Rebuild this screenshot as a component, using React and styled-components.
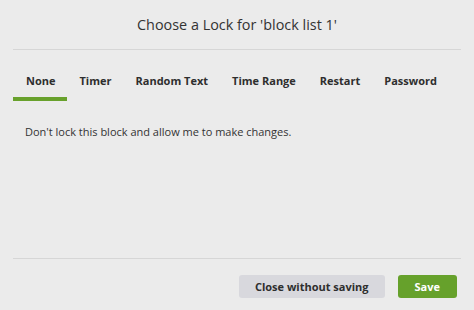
import React, { useState } from 'react'
import styled, { createGlobalStyle } from 'styled-components'

const tabs = ['None', 'Timer', 'Random Text', 'Time Range', 'Restart', 'Password']

const App = () => {
    const [active, setActive] = useState(0)
    return (
        <>
            <Global />
            <Dialog>
                <Header>Choose a Lock for 'block list 1'</Header>
                <Divider />
                <TabBar>
                    {tabs.map((t, i) => (
                        <Tab key={t} active={i === active} onClick={() => setActive(i)}>
                            {t}
                        </Tab>
                    ))}
                </TabBar>
                <Body>Don't lock this block and allow me to make changes.</Body>
                <Divider />
                <Footer>
                    <Button>Close without saving</Button>
                    <Button primary>Save</Button>
                </Footer>
            </Dialog>
        </>
    )
}

export default App

const Global = createGlobalStyle`
    html, body {
        margin: 0;
        padding: 0;
        background: #ebebeb;
    }
    body {
        font-family: "Open Sans", "Liberation Sans", sans-serif;
        color: #333;
    }
`

const Dialog = styled.div`
    width: 474px;
    height: 310px;
    box-sizing: border-box;
    background: #ebebeb;
    padding: 0 13px;
    display: flex;
    flex-direction: column;
`

const Header = styled.div`
    height: 49px;
    display: flex;
    align-items: center;
    justify-content: center;
    font-size: 14.4px;
    color: #333;
    padding-bottom: 1px;
    box-sizing: border-box;
`

const Divider = styled.div`
    height: 1px;
    background: #d6d6d6;
`

const TabBar = styled.div`
    display: flex;
    margin-top: 16px;
`

const Tab = styled.div`
    font-size: 11px;
    font-weight: 700;
    color: #2e2e2e;
    padding: 7px 12px 9px 13px;
    margin-right: -1px;
    border-bottom: 4px solid ${({ active }) => (active ? '#68a12c' : 'transparent')};
    cursor: pointer;
    white-space: nowrap;
`

const Body = styled.div`
    font-size: 11px;
    color: #333;
    padding: 23px 12px 0;
    flex: 1;
`

const Footer = styled.div`
    display: flex;
    justify-content: flex-end;
    gap: 13px;
    padding: 16px 4px 12px 0;
`

const Button = styled.button`
    font-family: inherit;
    font-size: 11px;
    font-weight: 700;
    height: 23px;
    border: none;
    border-radius: 3px;
    padding: 0 ${({ primary }) => (primary ? '17px' : '16px')};
    background: ${({ primary }) => (primary ? '#66a12b' : '#d8d8dd')};
    color: ${({ primary }) => (primary ? '#fff' : '#2e2e2e')};
    cursor: pointer;
`
